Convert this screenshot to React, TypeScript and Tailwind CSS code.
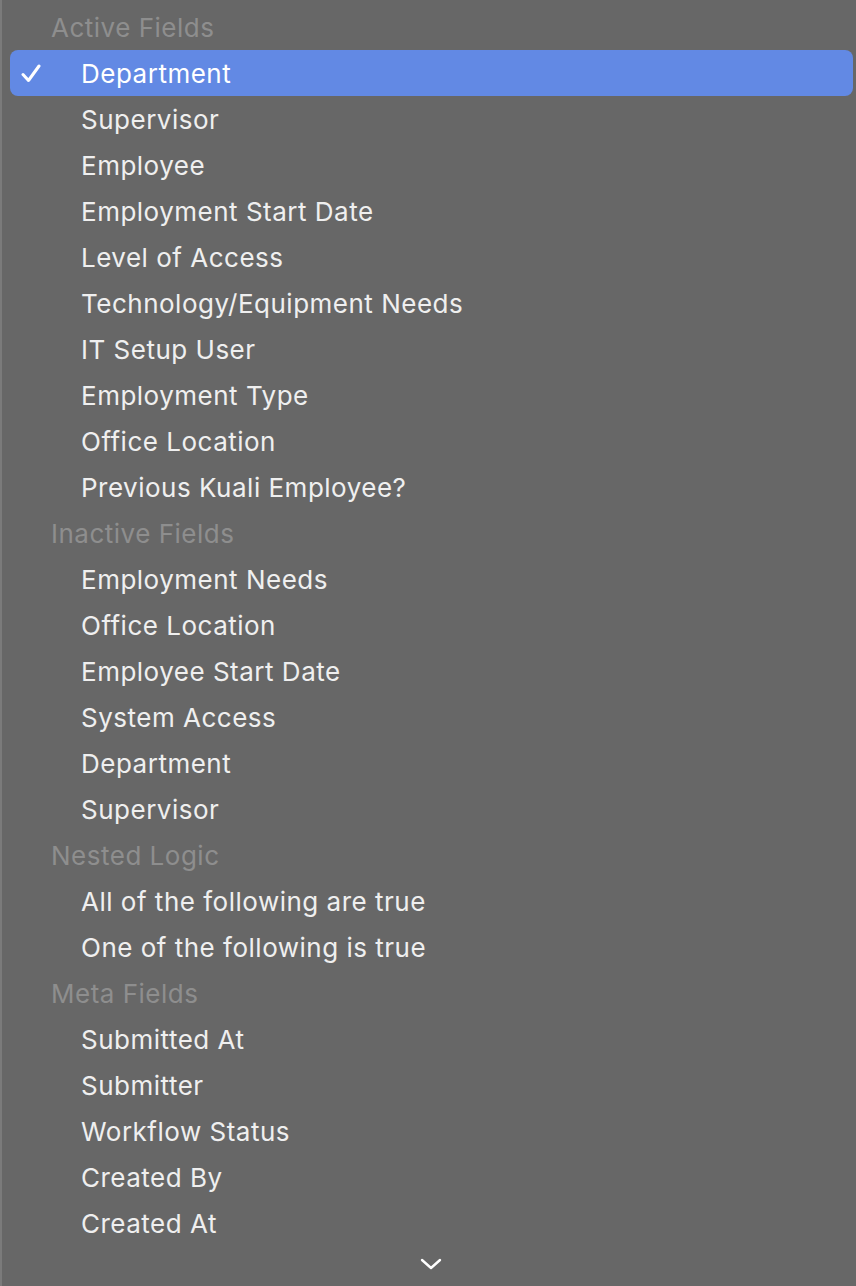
const sections: { title: string; items: string[] }[] = [
  {
    title: 'Active Fields',
    items: [
      'Department',
      'Supervisor',
      'Employee',
      'Employment Start Date',
      'Level of Access',
      'Technology/Equipment Needs',
      'IT Setup User',
      'Employment Type',
      'Office Location',
      'Previous Kuali Employee?',
    ],
  },
  {
    title: 'Inactive Fields',
    items: [
      'Employment Needs',
      'Office Location',
      'Employee Start Date',
      'System Access',
      'Department',
      'Supervisor',
    ],
  },
  {
    title: 'Nested Logic',
    items: ['All of the following are true', 'One of the following is true'],
  },
  {
    title: 'Meta Fields',
    items: ['Submitted At', 'Submitter', 'Workflow Status', 'Created By', 'Created At'],
  },
]

function Check() {
  return (
    <svg width="20" height="19" viewBox="0 0 20 19" fill="none">
      <path
        d="M2 10.5 L7.5 16.5 L18 2"
        stroke="white"
        strokeWidth="3"
        strokeLinecap="round"
        strokeLinejoin="round"
      />
    </svg>
  )
}

export default function App() {
  return (
    <div
      className="relative w-[856px] h-[1286px] overflow-hidden bg-[#676767] border-l-2 border-[#7b7b7b] pt-[4px] pl-[8px] pr-[3px] text-[26px] leading-[46px] tracking-[0.5px] antialiased"
      style={{ fontFamily: 'Inter, "Noto Sans", sans-serif' }}
    >
      {sections.map((section, si) => (
        <div key={si}>
          <div className="h-[46px] pl-[41px] pt-[1px] text-[#8e8e8e]">{section.title}</div>
          {section.items.map((item, i) => {
            const selected = si === 0 && i === 0
            return (
              <div
                key={i}
                className={
                  selected
                    ? 'flex h-[46px] items-center rounded-[8px] bg-[#6289e4] text-white'
                    : 'flex h-[46px] items-center text-[#efefef]'
                }
              >
                <span className="flex w-[71px] pl-[11px]">{selected && <Check />}</span>
                <span className="pt-[2px]">{item}</span>
              </div>
            )
          })}
        </div>
      ))}
      <div className="flex justify-center pt-[12px] pr-[2px]">
        <svg width="22" height="12" viewBox="0 0 22 12" fill="none">
          <path d="M2 2 L11 10 L20 2" stroke="white" strokeWidth="2.4" strokeLinecap="round" strokeLinejoin="round" />
        </svg>
      </div>
    </div>
  )
}
